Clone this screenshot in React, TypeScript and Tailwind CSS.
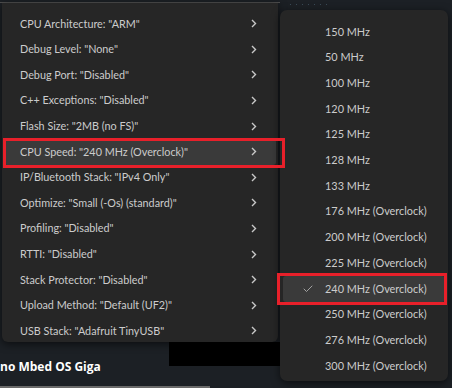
import { Check } from 'lucide-react'

const mainItems = [
  'CPU Architecture: "ARM"',
  'Debug Level: "None"',
  'Debug Port: "Disabled"',
  'C++ Exceptions: "Disabled"',
  'Flash Size: "2MB (no FS)"',
  'CPU Speed: "240 MHz (Overclock)"',
  'IP/Bluetooth Stack: "IPv4 Only"',
  'Optimize: "Small (-Os) (standard)"',
  'Profiling: "Disabled"',
  'RTTI: "Disabled"',
  'Stack Protector: "Disabled"',
  'Upload Method: "Default (UF2)"',
  'USB Stack: "Adafruit TinyUSB"',
]

const speeds = [
  '150 MHz',
  '50 MHz',
  '100 MHz',
  '120 MHz',
  '125 MHz',
  '128 MHz',
  '133 MHz',
  '176 MHz (Overclock)',
  '200 MHz (Overclock)',
  '225 MHz (Overclock)',
  '240 MHz (Overclock)',
  '250 MHz (Overclock)',
  '276 MHz (Overclock)',
  '300 MHz (Overclock)',
]

function Chevron() {
  return (
    <svg width="6" height="9" viewBox="0 0 6 9" className="text-[#c8c8c8]">
      <path d="M1 1l3.5 3.5L1 8" fill="none" stroke="currentColor" strokeWidth="1.4" />
    </svg>
  )
}

export default function App() {
  return (
    <div
      className="relative w-[452px] h-[388px] overflow-hidden bg-[#1c2025] text-[#cccccc]"
      style={{ fontFamily: 'Lato, "Noto Sans", sans-serif' }}
    >
      {/* editor background */}
      <div className="flex flex-col h-full">
        <div className="h-[3px] w-[280px] border-b border-[#505050]" />
        <div className="flex-1" />
        <div className="flex flex-col w-[280px] h-[44px]">
          <div className="flex h-[24px]">
            <div className="w-[169px]" />
            <div className="flex-1 bg-black" />
          </div>
          <div
            className="-mt-[9px] text-[12px] font-bold text-white leading-[20px]"
            style={{ fontFamily: '"Open Sans", sans-serif' }}
          >
            no Mbed OS Giga
          </div>
        </div>
        <div className="h-[2px] w-[210px] bg-[#6a6a6a]" />
      </div>

      {/* top right editor strip */}
      <div className="absolute left-[290px] top-[4px] flex gap-[5px]">
        {Array.from({ length: 7 }).map((_, i) => (
          <div key={i} className="w-[1px] h-[1px] bg-[#3a4a55]" />
        ))}
      </div>

      {/* main menu */}
      <div className="absolute left-[2px] top-[3px] w-[276px] h-[339px] overflow-hidden rounded-b-[6px] bg-[#262626] shadow-[0_2px_8px_rgba(0,0,0,0.6)] pt-[8px] text-[10.8px]">
        {mainItems.map((item, i) => (
          <div
            key={item}
            className={`flex items-center justify-between h-[25.6px] pl-[16px] pr-[19px] mx-[2px] rounded-[3px] ${
              i === 5 ? 'bg-[#3a3a3a]' : ''
            }`}
          >
            <span className="whitespace-nowrap">{item}</span>
            <Chevron />
          </div>
        ))}
      </div>

      {/* sub menu */}
      <div className="absolute left-[280px] top-[10px] w-[168px] h-[371px] rounded-[7px] bg-[#262626] shadow-[0_2px_8px_rgba(0,0,0,0.6)] pt-[9px] px-[3px] text-[10.9px]">
        {speeds.map((s) => {
          const selected = s === '240 MHz (Overclock)'
          return (
            <div
              key={s}
              className={`flex items-center h-[25.7px] rounded-[3px] ${selected ? 'bg-[#3a3a3a]' : ''}`}
            >
              <div className="w-[42px] flex justify-end pr-[11px]">
                {selected && <Check size={12} strokeWidth={1.6} className="text-[#bdbdbd]" />}
              </div>
              <span className="whitespace-nowrap">{s}</span>
            </div>
          )
        })}
      </div>

      {/* red highlight boxes */}
      <div className="absolute left-[3px] top-[138px] w-[282px] h-[30px] border-[3px] border-[#e8202a]" />
      <div className="absolute left-[277px] top-[273px] w-[170px] h-[32px] border-[3px] border-[#e8202a]" />
    </div>
  )
}
